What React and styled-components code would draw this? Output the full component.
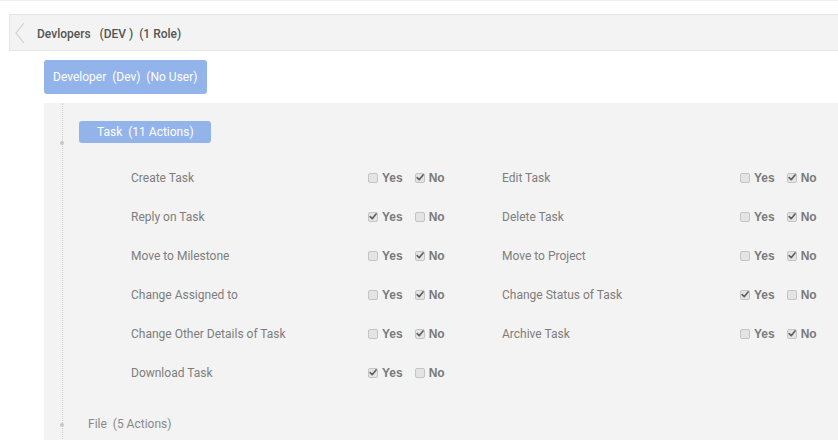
import React from "react";
import styled, { createGlobalStyle } from "styled-components";

const GlobalStyle = createGlobalStyle`
  html, body {
    margin: 0;
    padding: 0;
    background: #fff;
    font-family: Roboto, "Noto Sans", sans-serif;
    overflow: hidden;
  }
`;

const permissions = [
  { label: "Create Task", yes: false },
  { label: "Edit Task", yes: false },
  { label: "Reply on Task", yes: true },
  { label: "Delete Task", yes: false },
  { label: "Move to Milestone", yes: false },
  { label: "Move to Project", yes: false },
  { label: "Change Assigned to", yes: false },
  { label: "Change Status of Task", yes: true },
  { label: "Change Other Details of Task", yes: false },
  { label: "Archive Task", yes: false },
  { label: "Download Task", yes: true },
];

const Check = ({ checked, text }) => (
  <Option>
    <Box>
      {checked && (
        <svg width="9" height="9" viewBox="0 0 10 10">
          <path d="M1.5 5.2 L4 7.8 L8.8 1.8" fill="none" stroke="#5f5f5f" strokeWidth="2" strokeLinecap="round" strokeLinejoin="round" />
        </svg>
      )}
    </Box>
    <OptionText>{text}</OptionText>
  </Option>
);

const App = () => {
  return (
    <Page>
      <GlobalStyle />
      <Header>
        <svg width="10" height="22" viewBox="0 0 10 22">
          <polyline points="9,1 1,11 9,21" fill="none" stroke="#d0d0d0" strokeWidth="1.2" />
        </svg>
        <HeaderTitle>Devlopers   (DEV )  (1 Role)</HeaderTitle>
      </Header>

      <RoleButton>Developer  (Dev)  (No User)</RoleButton>

      <Panel>
        <Tree>
          <GroupButton active>Task  (11 Actions)</GroupButton>
          <Grid>
            {permissions.map((p) => (
              <React.Fragment key={p.label}>
                <Label>{p.label}</Label>
                <Choices>
                  <Check checked={p.yes} text="Yes" />
                  <Check checked={!p.yes} text="No" />
                </Choices>
              </React.Fragment>
            ))}
          </Grid>
          <GroupButton>File  (5 Actions)</GroupButton>
        </Tree>
      </Panel>
    </Page>
  );
};

/* Styled Components */
const Page = styled.div`
  height: 440px;
  border-top: 1px solid #f0f0f0;
  box-sizing: border-box;
  padding-top: 13px;
`;

const Header = styled.div`
  display: flex;
  align-items: center;
  gap: 12px;
  height: 37px;
  margin-left: 9px;
  padding-left: 5px;
  box-sizing: border-box;
  background: #f3f3f3;
  border: 1px solid #e6e6e6;
  border-right: none;
`;

const HeaderTitle = styled.span`
  white-space: pre;
  font-size: 12px;
  font-weight: 500;
  color: #555;
  padding-top: 2px;
`;

const RoleButton = styled.div`
  display: inline-flex;
  align-items: center;
  height: 34px;
  margin: 9px 0 0 44px;
  padding: 0 10px 0 9px;
  background: #93b4ea;
  border-radius: 3px;
  color: #fff;
  font-size: 12px;
  white-space: pre;
`;

const Panel = styled.div`
  margin: 9px 0 0 44px;
  padding-left: 18px;
  background: #f3f3f3;
  height: 340px;
`;

const Tree = styled.div`
  border-left: 1px dotted #cdcdcd;
  padding: 18px 0 0 16px;
  height: 100%;
  box-sizing: border-box;
`;

const GroupButton = styled.div`
  position: relative;
  display: inline-flex;
  align-items: center;
  height: 22px;
  padding: ${(p) => (p.active ? "0 17px 0 18px" : "0 9px")};
  border-radius: 3px;
  background: ${(p) => (p.active ? "#93b4ea" : "transparent")};
  color: ${(p) => (p.active ? "#fff" : "#888")};
  font-size: 12px;
  white-space: pre;

  &::before {
    content: "";
    position: absolute;
    left: -19px;
    top: ${(p) => (p.active ? "20px" : "10px")};
    width: 4px;
    height: 4px;
    border-radius: 50%;
    background: #c8c8c8;
  }
`;

const Grid = styled.div`
  display: grid;
  grid-template-columns: 237px 134px 238px auto;
  grid-auto-rows: 39px;
  align-items: center;
  margin: 15px 0 21px 52px;
`;

const Label = styled.span`
  font-size: 12px;
  color: #7d7d7d;
`;

const Choices = styled.div`
  display: flex;
  gap: 12px;
`;

const Option = styled.span`
  display: inline-flex;
  align-items: center;
  gap: 4px;
`;

const Box = styled.span`
  display: inline-flex;
  align-items: center;
  justify-content: center;
  width: 10px;
  height: 10px;
  box-sizing: border-box;
  border: 1px solid #c4c4c4;
  border-radius: 2px;
  background: #e4e4e4;
`;

const OptionText = styled.span`
  font-family: "Liberation Sans", Arial, sans-serif;
  font-size: 12px;
  font-weight: bold;
  color: #7a7a7a;
`;

export default App;
